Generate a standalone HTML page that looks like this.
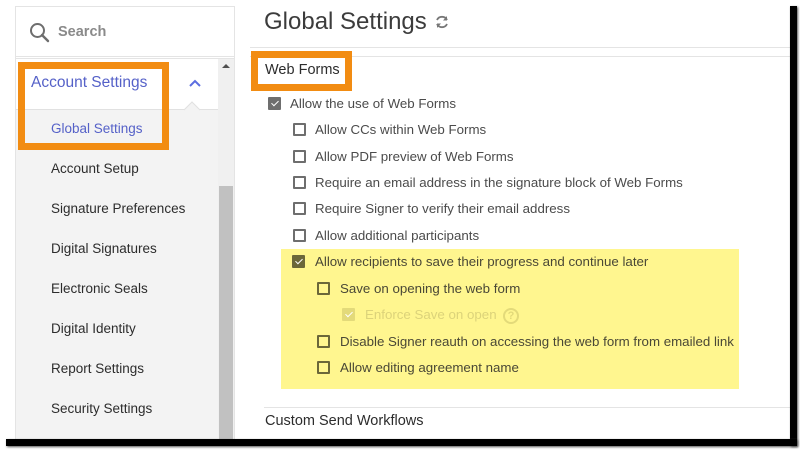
<!DOCTYPE html>
<html><head><meta charset="utf-8"><style>
*{margin:0;padding:0;box-sizing:border-box}
body{width:800px;height:450px;background:#fff;position:relative;overflow:hidden;font-family:"Liberation Sans",sans-serif;color:#2c2c2c}
.abs{position:absolute}
.shR{left:790px;top:6px;width:7px;height:440px;background:#000;box-shadow:1px 1px 2px #555}
.shB{left:6px;top:439px;width:791px;height:7px;background:#000;box-shadow:1px 1px 2px #555}
.side{left:15px;top:6px;width:220px;height:433px;border-left:1px solid #e4e4e4;border-top:1px solid #e4e4e4;border-right:1px solid #e4e4e4}
.nav{left:16px;top:110px;width:202px;height:329px;background:#f3f3f3}
.item{position:absolute;left:51px;font-size:13.5px;color:#2c2c2c}
.cb{position:absolute;width:13px;height:13px;border:2px solid #6e6e6e;border-radius:1px}
.cbc{background:#6e6e6e;border-color:#6e6e6e}
.cbc:after{content:"";position:absolute;left:2.5px;top:0px;width:3px;height:6px;border:solid #fff;border-width:0 1.8px 1.8px 0;transform:rotate(45deg)}
.lbl{position:absolute;font-size:13.3px;color:#4b4b4b;white-space:nowrap}
</style></head><body>
<div class="abs side"></div>
<div class="abs" style="left:16px;top:56px;width:218px;height:1px;background:#e4e4e4"></div>
<div class="abs" style="left:16px;top:58px;width:218px;height:1px;background:#e4e4e4"></div>
<svg class="abs" style="left:29px;top:22px" width="22" height="22" viewBox="0 0 22 22"><circle cx="8.5" cy="8.5" r="6.5" fill="none" stroke="#6e6e6e" stroke-width="2"/><path d="M13 13l6 6" stroke="#6e6e6e" stroke-width="2.4" stroke-linecap="round"/></svg>
<div class="abs" style="left:58px;top:24px;font-size:14.5px;color:#8a8a8a;font-weight:bold">Search</div>
<div class="abs nav"></div>
<div class="abs" style="left:16px;top:109px;width:202px;height:1px;background:#e1e1e1"></div>
<svg class="abs" style="left:183px;top:101px" width="24" height="10"><path d="M1 9L9 1L17 9" fill="#f3f3f3" stroke="#e1e1e1"/></svg>
<div class="abs" style="left:218px;top:59px;width:16px;height:380px;background:#f0f0f0"></div>
<div class="abs" style="left:219px;top:186px;width:14px;height:253px;background:#c1c1c1"></div>
<svg class="abs" style="left:222px;top:63px" width="8" height="6"><path d="M0 5L4 1L8 5Z" fill="#505050"/></svg>
<svg class="abs" style="left:189px;top:79px" width="12" height="8"><path d="M1 7L6 2L11 7" fill="none" stroke="#5c6ee0" stroke-width="2"/></svg>
<div class="abs" style="left:31px;top:74px;font-size:15.5px;color:#5561c8">Account Settings</div>
<div class="abs" style="left:51px;top:121px;font-size:13.5px;color:#5561c8">Global Settings</div>
<div class="abs" style="left:18px;top:62px;width:151px;height:88px;border:7px solid #f28c12"></div>
<div class="item" style="top:161px">Account Setup</div>
<div class="item" style="top:201px">Signature Preferences</div>
<div class="item" style="top:241px">Digital Signatures</div>
<div class="item" style="top:281px">Electronic Seals</div>
<div class="item" style="top:321px">Digital Identity</div>
<div class="item" style="top:361px">Report Settings</div>
<div class="item" style="top:401px">Security Settings</div>

<div class="abs" style="left:264px;top:8px;font-size:24px;color:#3c3c3c;font-weight:300">Global Settings</div>
<svg class="abs" style="left:434px;top:14px" width="16" height="16" viewBox="0 0 16 16"><path d="M13 6A5.5 5.5 0 0 0 3 6M3 10A5.5 5.5 0 0 0 13 10" fill="none" stroke="#777" stroke-width="1.8"/><path d="M13 2v4.5H9" fill="#777"/><path d="M3 14v-4.5H7" fill="#777"/></svg>
<div class="abs" style="left:250px;top:47px;width:540px;height:1px;background:#e4e4e4"></div>
<div class="abs" style="left:250px;top:56px;width:540px;height:1px;background:#e4e4e4"></div>
<div class="abs" style="left:251px;top:51px;width:101px;height:40px;border:7px solid #f28c12;background:#fff"></div>
<div class="abs" style="left:265px;top:62px;font-size:14.5px;color:#2c2c2c">Web Forms</div>

<div class="abs" style="left:281px;top:249px;width:458px;height:140px;background:#fff68f"></div>

<div class="cb cbc" style="left:268px;top:97px"></div><div class="lbl" style="left:290px;top:96px">Allow the use of Web Forms</div>
<div class="cb" style="left:293px;top:123px"></div><div class="lbl" style="left:315px;top:122px">Allow CCs within Web Forms</div>
<div class="cb" style="left:293px;top:150px"></div><div class="lbl" style="left:315px;top:149px">Allow PDF preview of Web Forms</div>
<div class="cb" style="left:293px;top:176px"></div><div class="lbl" style="left:315px;top:175px">Require an email address in the signature block of Web Forms</div>
<div class="cb" style="left:293px;top:202px"></div><div class="lbl" style="left:315px;top:201px">Require Signer to verify their email address</div>
<div class="cb" style="left:293px;top:229px"></div><div class="lbl" style="left:315px;top:228px">Allow additional participants</div>
<div class="cb cbc" style="left:292px;top:255px;border-color:#6b6739;background:#6b6739"></div><div class="lbl" style="left:315px;top:254px;color:#4a4836">Allow recipients to save their progress and continue later</div>
<div class="cb" style="left:317px;top:282px;border-color:#6b6739"></div><div class="lbl" style="left:340px;top:281px;color:#4a4836">Save on opening the web form</div>
<div class="cb cbc" style="left:342px;top:308px;border-color:#e3da7a;background:#e3da7a"></div><div class="lbl" style="left:365px;top:307px;color:#dcd37a">Enforce Save on open</div>
<div class="abs" style="left:503px;top:308px;width:16px;height:16px;border:2px solid #e3da7a;border-radius:50%;font-size:11px;color:#e3da7a;text-align:center;line-height:12px;font-weight:bold">?</div>
<div class="cb" style="left:317px;top:335px;border-color:#6b6739"></div><div class="lbl" style="left:340px;top:334px;color:#4a4836">Disable Signer reauth on accessing the web form from emailed link</div>
<div class="cb" style="left:317px;top:361px;border-color:#6b6739"></div><div class="lbl" style="left:340px;top:360px;color:#4a4836">Allow editing agreement name</div>

<div class="abs" style="left:264px;top:407px;width:526px;height:1px;background:#e4e4e4"></div>
<div class="abs" style="left:265px;top:413px;font-size:14.5px;color:#2c2c2c">Custom Send Workflows</div>

<div class="abs shR"></div>
<div class="abs shB"></div>
</body></html>
